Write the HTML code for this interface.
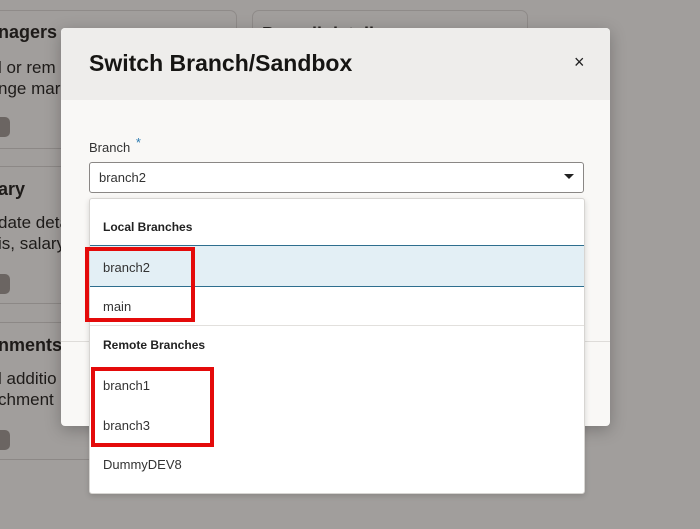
<!DOCTYPE html>
<html><head><style>
body{margin:0;width:700px;height:529px;background:#a19e9c;position:relative;overflow:hidden;font-family:"Liberation Sans",sans-serif;}
.a{position:absolute;}
.bg{color:#1e1b19;font-size:17px;}
.hd{font-weight:bold;font-size:18px;}
.btn{position:absolute;left:-10px;width:20px;height:20px;border-radius:5px;background:#6b6562;}
.ln{position:absolute;left:0;width:237px;height:1px;background:#8c8886;}
.card2{position:absolute;left:252px;top:10px;width:274px;height:60px;border:1px solid #8f8b89;border-radius:7px;}
.modal{position:absolute;left:61px;top:28px;width:549px;height:398px;background:#f9f8f6;border-radius:4px;box-shadow:0 4px 16px rgba(0,0,0,.25);overflow:hidden;}
.mh{height:72px;background:#eeedeb;}
.dd{position:absolute;left:89px;top:198px;width:494px;height:294px;background:#fff;border:1px solid #d7d5d2;border-radius:3px;box-shadow:0 2px 6px rgba(0,0,0,.15);font-size:13px;color:#333;}
.it{position:absolute;left:13px;}
.red{position:absolute;border:4px solid #e40a0a;}
</style></head><body>
<div class="a" style="left:0;top:10px;width:236px;height:410px;border:1px solid #8f8b89;border-left:none;border-radius:0 7px 0 0;border-bottom:none"></div>
<div class="card2"></div>
<div class="a bg hd" style="left:-2px;top:22px">nagers</div>
<div class="a bg" style="left:-2px;top:57px;line-height:21px">l or rem<br>nge mar</div>
<div class="btn" style="top:117px"></div>
<div class="ln" style="top:148px"></div>
<div class="ln" style="top:166px"></div>
<div class="a bg hd" style="left:-2px;top:179px">ary</div>
<div class="a bg" style="left:-2px;top:212px;line-height:21px">date deta<br>is, salary</div>
<div class="btn" style="top:274px"></div>
<div class="ln" style="top:303px"></div>
<div class="ln" style="top:322px"></div>
<div class="a bg hd" style="left:-2px;top:335px">nments</div>
<div class="a bg" style="left:-2px;top:368px;line-height:21px">l additio<br>chment</div>
<div class="btn" style="top:430px"></div>
<div class="ln" style="top:459px"></div>
<div class="a bg hd" style="left:262px;top:24px;color:#2a2624">Payroll details</div>

<div class="modal">
 <div class="mh"></div>
 <div class="a" style="left:28px;top:22px;font-size:23px;font-weight:bold;color:#161513">Switch Branch/Sandbox</div>
 <div class="a" style="left:513px;top:24px;font-size:18px;color:#222">×</div>
 <div class="a" style="left:28px;top:112px;font-size:13px;color:#333">Branch <span style="color:#2d7bb0;position:relative;top:-5px;left:2px">*</span></div>
 <div class="a" style="left:28px;top:134px;width:493px;height:29px;background:#fff;border:1px solid #8a8785;border-radius:3px;"></div>
 <div class="a" style="left:38px;top:142px;font-size:13px;color:#333">branch2</div>
 <div class="a" style="left:503px;top:146px;width:0;height:0;border-left:5px solid transparent;border-right:5px solid transparent;border-top:5px solid #222"></div>
 <div class="a" style="left:0;top:313px;width:549px;height:1px;background:#dedcd9"></div>
</div>

<div class="dd">
 <div class="it" style="top:21px;font-weight:bold;font-size:12px;color:#222">Local Branches</div>
 <div class="a" style="left:0;top:46px;width:494px;height:40px;background:#e3eff5;border-top:1px solid #2e6e8e;border-bottom:1px solid #2e6e8e;"></div>
 <div class="it" style="top:61px">branch2</div>
 <div class="it" style="top:100px">main</div>
 <div class="a" style="left:0;top:126px;width:494px;height:1px;background:#e2e0dd"></div>
 <div class="it" style="top:139px;font-weight:bold;font-size:12px;color:#222">Remote Branches</div>
 <div class="it" style="top:179px">branch1</div>
 <div class="it" style="top:219px">branch3</div>
 <div class="it" style="top:258px">DummyDEV8</div>
</div>
<div class="red" style="left:85px;top:247px;width:102px;height:67px"></div>
<div class="red" style="left:91px;top:367px;width:115px;height:72px"></div>
</body></html>
